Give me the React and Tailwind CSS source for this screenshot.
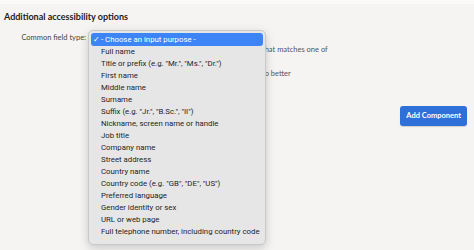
import React from 'react';

const purposes = [
  'Full name',
  'Title or prefix (e.g. "Mr.", "Ms.", "Dr.")',
  'First name',
  'Middle name',
  'Surname',
  'Suffix (e.g. "Jr.", "B.Sc.", "II")',
  'Nickname, screen name or handle',
  'Job title',
  'Company name',
  'Street address',
  'Country name',
  'Country code (e.g. "GB", "DE", "US")',
  'Preferred language',
  'Gender identity or sex',
  'URL or web page',
  'Full telephone number, including country code',
];

const PurposeMenu = () => (
  <div className="absolute left-[88px] top-[30px] w-[178px] rounded-[5px] border border-[#c9c9cb] bg-[#e6e6e7] pt-[2px] pb-[6px] px-[2px] shadow-[0_3px_10px_rgba(0,0,0,0.18)] font-['Roboto',sans-serif] text-[7.8px] text-[#1e1e1e]">
    <div className="flex h-[13px] items-center rounded-[3px] bg-[#3d85f6] pl-[2px] text-white">
      <span className="w-[8px] text-[8px]">✓</span>
      <span>- Choose an input purpose -</span>
    </div>
    {purposes.map((p) => (
      <div key={p} className="flex h-[12px] items-center pl-[10px] whitespace-nowrap">
        {p}
      </div>
    ))}
  </div>
);

export default function App() {
  return (
    <div className="relative h-[250px] w-[474px] overflow-hidden bg-[#f5f4f2] font-['Lato',sans-serif] text-[#333]">
      <div className="h-[4px] bg-[#fafaf9]" />
      <h2 className="pl-[4px] pt-[7px] text-[9px] font-bold leading-[12px] text-[#222]">
        Additional accessibility options
      </h2>

      <div className="mt-[9px] flex">
        <div className="w-[88px] pr-[2px] text-right text-[7.5px] leading-[12px] text-[#444]">
          Common field type:
        </div>
        <div className="h-[14px] w-[174px] rounded-[3px] border border-[#bbb] bg-white" />
      </div>

      <div className="ml-[262px] -mt-[2px] text-[7.5px] leading-[12px] text-[#555]">
        <p className="whitespace-nowrap">that matches one of</p>
        <p className="mt-[12px] whitespace-nowrap">to better</p>
      </div>

      <div className="mt-[26px] flex justify-end pr-[7px]">
        <button className="h-[20px] rounded-[3px] bg-[#2e6fd8] px-[6px] text-[7.5px] font-bold text-white shadow-[0_1px_1px_rgba(0,0,0,0.15)]">
          Add Component
        </button>
      </div>

      <PurposeMenu />
    </div>
  );
}
